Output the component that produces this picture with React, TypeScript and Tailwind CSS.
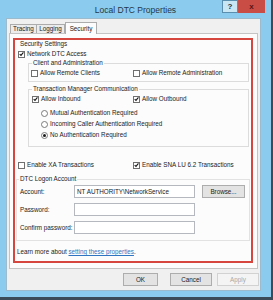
import React from 'react';

function Check({ on }: { on?: boolean }) {
  return (
    <span className="flex items-center justify-center w-[7px] h-[7px] shrink-0 border border-[#6f6f6f] bg-white">
      {on && (
        <svg viewBox="0 0 6 6" className="w-[6px] h-[6px]">
          <path d="M0.8 3.1 L2.4 4.7 L5.3 1.1" fill="none" stroke="#1a1a1a" strokeWidth="1.3" />
        </svg>
      )}
    </span>
  );
}

function Radio({ on }: { on?: boolean }) {
  return (
    <span className="flex items-center justify-center w-[7px] h-[7px] shrink-0 rounded-full border border-[#7a7a7a] bg-white">
      {on && <span className="w-[3px] h-[3px] rounded-full bg-[#1a1a1a]" />}
    </span>
  );
}

function CheckRow({ on, label }: { on?: boolean; label: string }) {
  return (
    <div className="flex items-center h-[8px] gap-[2px]">
      <Check on={on} />
      <span className="whitespace-nowrap">{label}</span>
    </div>
  );
}

function RadioRow({ on, label }: { on?: boolean; label: string }) {
  return (
    <div className="flex items-center h-[8px] gap-[2px]">
      <Radio on={on} />
      <span className="whitespace-nowrap">{label}</span>
    </div>
  );
}

function Field({ label, value, mt }: { label: string; value?: string; mt: string }) {
  return (
    <div className={`flex items-center h-[13px] pl-[3px] ${mt}`}>
      <span className="w-[54px] whitespace-nowrap">{label}</span>
      <div className="w-[121px] h-[13px] bg-white border border-[#b5b8bf] pl-[2px] flex items-center text-[#1a1a1a] whitespace-nowrap overflow-hidden">
        {value}
      </div>
    </div>
  );
}

export default function App() {
  return (
    <div className="w-[273px] h-[300px] flex flex-col bg-[#8bcbed] border-r-[2px] border-b-[3px] border-[#3b4b57] font-['Liberation_Sans',Arial,sans-serif] text-[6.3px] leading-[8px] text-[#222] overflow-hidden">
      {/* title bar */}
      <div className="flex h-[18px] shrink-0 pl-[49px] pr-[6px]">
        <div className="flex-1 pt-[5px] text-center text-[8.5px] leading-[10px] text-[#243848]">
          Local DTC Properties
        </div>
        <div className="flex h-[13px]">
          <div className="w-[16px] h-[13px] flex items-center justify-center bg-[#c9e6f5] border border-[#5a8fb0] text-[8px] font-bold text-[#1f3344]">
            ?
          </div>
          <div className="w-[27px] h-[13px] flex items-center justify-center bg-[#c94d44] text-[8px] font-bold text-[#5a1414]">
            x
          </div>
        </div>
      </div>

      {/* client area */}
      <div className="ml-[6px] w-[255px] h-[273px] shrink-0 flex flex-col bg-[#f0f0f0] border border-[#9cbccd]">
        {/* tabs */}
        <div className="flex items-end h-[14px] pl-[3px] shrink-0">
          <div className="w-[27px] h-[9px] flex items-center justify-center border border-b-0 border-[#acacac] bg-[#ececec]">
            Tracing
          </div>
          <div className="w-[28px] h-[9px] flex items-center justify-center border border-b-0 border-l-0 border-[#acacac] bg-[#ececec]">
            Logging
          </div>
          <div className="relative z-10 -mb-[1px] w-[32px] h-[12px] flex items-center justify-center border border-b-0 border-[#acacac] bg-[#fcfcfc]">
            Security
          </div>
        </div>

        {/* tab panel */}
        <div className="ml-[2px] w-[249px] h-[236px] shrink-0 border border-[#c4c4c4] bg-[#fcfcfc] pl-[3px] pt-[4px]">
          <div className="w-[240px] h-[225px] border-[2px] border-[#d6463f] flex flex-col">
            <div className="pl-[5px] h-[8px]">Security Settings</div>
            <div className="mt-[2px] pl-[3px]">
              <CheckRow on label="Network DTC Access" />
            </div>

            <fieldset className="mt-[1px] ml-[13px] w-[221px] border border-[#dcdcdc] pb-[4px]">
              <legend className="ml-[3px] px-[1px] h-[8px]">Client and Administration</legend>
              <div className="flex mt-[2px] pl-[2px]">
                <div className="w-[102px]">
                  <CheckRow label="Allow Remote Clients" />
                </div>
                <CheckRow label="Allow Remote Administration" />
              </div>
            </fieldset>

            <fieldset className="mt-[3px] ml-[13px] w-[221px] border border-[#dcdcdc] pb-[7px]">
              <legend className="ml-[3px] px-[1px] h-[8px]">Transaction Manager Communication</legend>
              <div className="flex mt-[2px] pl-[3px]">
                <div className="w-[101px]">
                  <CheckRow on label="Allow Inbound" />
                </div>
                <CheckRow on label="Allow Outbound" />
              </div>
              <div className="pl-[12px] mt-[6px] flex flex-col gap-[3px]">
                <RadioRow label="Mutual Authentication Required" />
                <RadioRow label="Incoming Caller Authentication Required" />
                <RadioRow on label="No Authentication Required" />
              </div>
            </fieldset>

            <div className="flex mt-[14px] pl-[3px]">
              <div className="w-[115px]">
                <CheckRow label="Enable XA Transactions" />
              </div>
              <CheckRow on label="Enable SNA LU 6.2 Transactions" />
            </div>

            <fieldset className="mt-[6px] ml-[1px] w-[234px] border border-[#e2e2e2] pb-[6px]">
              <legend className="ml-[2px] px-[1px] h-[8px]">DTC Logon Account</legend>
              <div className="flex items-center mt-[2px]">
                <Field label="Account:" value="NT AUTHORITY\NetworkService" mt="" />
                <button className="ml-[7px] w-[43px] h-[13px] bg-[#e3e3e3] border border-[#adadad] text-[6.3px] leading-[8px] text-[#222]">
                  Browse...
                </button>
              </div>
              <Field label="Password:" mt="mt-[5px]" />
              <Field label="Confirm password:" mt="mt-[5px]" />
            </fieldset>

            <div className="mt-[7px] pl-[2px] h-[8px] whitespace-nowrap">
              Learn more about{' '}
              <span className="text-[#2f74c0] underline">setting these properties</span>.
            </div>
          </div>
        </div>

        {/* buttons */}
        <div className="flex mt-[4px] pl-[116px]">
          <button className="w-[35px] h-[13px] bg-[#e3e3e3] border border-[#adadad] text-[6.3px] leading-[8px] text-[#222]">
            OK
          </button>
          <button className="ml-[12px] w-[42px] h-[13px] bg-[#e3e3e3] border border-[#adadad] text-[6.3px] leading-[8px] text-[#222]">
            Cancel
          </button>
          <button className="ml-[5px] w-[42px] h-[13px] bg-[#f4f4f4] border border-[#d2d2d2] text-[6.3px] leading-[8px] text-[#a8a8a8]">
            Apply
          </button>
        </div>
      </div>
    </div>
  );
}
